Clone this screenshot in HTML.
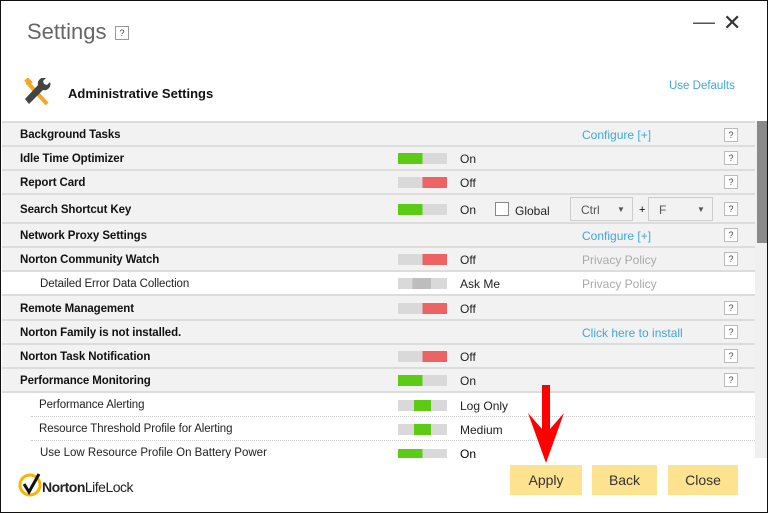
<!DOCTYPE html>
<html><head><style>
body{margin:0;width:768px;height:513px;overflow:hidden;font-family:"Liberation Sans",sans-serif;background:#fff;}
.win{position:absolute;left:0;top:0;width:766px;height:511px;border:1px solid #111;background:#fff;overflow:hidden}
.abs{position:absolute}
.row{position:absolute;left:1px;width:753px;background:#f2f2f2;border-bottom:2px solid #dcdcdc;box-sizing:border-box}
.row.w{background:#fff;border-bottom:1px dotted #ccc;left:30px;width:724px}
.lab{position:absolute;left:18px;font-size:11.5px;font-weight:bold;color:#111;letter-spacing:-0.1px;margin-top:1px}
.w .lab{left:8px;font-weight:normal;font-size:11.5px;color:#222;margin-top:0}
.tg{position:absolute;left:396px;width:49px;height:11px;background:#d9d9d9}
.w .tg{left:367px}
.st{position:absolute;left:458px;font-size:12px;color:#222}
.w .st{left:429px}
.lk{position:absolute;left:580px;font-size:12px;color:#3fa7dc}
.gr{color:#aaa}
.w .lk{left:551px}
.q{position:absolute;left:722px;width:12px;height:12px;border:1px solid #bbb;background:#fff;font-size:9px;text-align:center;line-height:12px;color:#444}
.btn{position:absolute;top:464px;height:30px;background:#fde28f;font-size:14px;color:#333;text-align:center;line-height:30px}
</style></head><body><div class="win">
<div class="abs" style="left:26px;top:18px;font-size:22px;color:#666">Settings</div>
<div class="abs" style="left:114px;top:25px;width:12px;height:12px;border:1px solid #999;font-size:9px;text-align:center;line-height:12px;color:#444">?</div>
<div class="abs" style="left:692px;top:8px;font-size:22px;color:#555">—</div>
<div class="abs" style="left:722px;top:9px;font-size:22px;color:#333">✕</div>
<svg class="abs" style="left:22px;top:77px" width="32" height="30" viewBox="0 0 32 30"><path d="M4 4 L24 26" stroke="#f5a623" stroke-width="4"/><path d="M3 1 L8 6" stroke="#f5a623" stroke-width="5"/><path d="M6 26 L20 12 A6 6 0 0 0 27 4 L24 7 L21 6 L20 3 L23 0 A6 6 0 0 0 15 7 L2 21 Z" fill="#444"/></svg>
<div class="abs" style="left:67px;top:85px;font-size:13px;font-weight:bold;color:#111">Administrative Settings</div>
<div class="abs" style="left:668px;top:79px;font-size:11.5px;color:#3fa7dc">Use Defaults</div>
<div class="abs" style="left:1px;top:120px;width:753px;height:2px;background:#dcdcdc"></div>

<div class="row" style="top:122px;height:24px"><span class="lab" style="top:5px">Background Tasks</span><span class="lk" style="top:5px">Configure [+]</span><span class="q" style="top:5px">?</span></div>
<div class="row" style="top:146px;height:24px"><span class="lab" style="top:5px">Idle Time Optimizer</span><span class="tg" style="top:6px;background:linear-gradient(90deg,#5ccb13 50%,#d9d9d9 50%)"></span><span class="st" style="top:5px">On</span><span class="q" style="top:4px">?</span></div>
<div class="row" style="top:170px;height:24px"><span class="lab" style="top:5px">Report Card</span><span class="tg" style="top:6px;background:linear-gradient(90deg,#d9d9d9 50%,#ec6363 50%)"></span><span class="st" style="top:5px">Off</span><span class="q" style="top:4px">?</span></div>
<div class="row" style="top:194px;height:29px"><span class="lab" style="top:8px">Search Shortcut Key</span><span class="tg" style="top:9px;background:linear-gradient(90deg,#5ccb13 50%,#d9d9d9 50%)"></span><span class="st" style="top:8px">On</span>
<span class="abs" style="left:493px;top:7px;width:12px;height:12px;border:1px solid #888;background:#fff"></span><span class="st" style="left:513px;top:9px">Global</span>
<span class="abs" style="left:568px;top:2px;width:63px;height:24px;border:1px solid #ccc;font-size:12px;color:#555;line-height:24px;box-sizing:border-box;padding-left:10px">Ctrl<span style="position:absolute;left:46px;font-size:8px">▼</span></span>
<span class="abs" style="left:637px;top:9px;font-size:11px">+</span>
<span class="abs" style="left:646px;top:2px;width:65px;height:24px;border:1px solid #ccc;font-size:12px;color:#555;line-height:24px;box-sizing:border-box;padding-left:10px">F<span style="position:absolute;left:48px;font-size:8px">▼</span></span>
<span class="q" style="top:7px">?</span></div>
<div class="row" style="top:223px;height:24px"><span class="lab" style="top:5px">Network Proxy Settings</span><span class="lk" style="top:5px">Configure [+]</span><span class="q" style="top:4px">?</span></div>
<div class="row" style="top:247px;height:24px"><span class="lab" style="top:5px">Norton Community Watch</span><span class="tg" style="top:6px;background:linear-gradient(90deg,#d9d9d9 50%,#ec6363 50%)"></span><span class="st" style="top:5px">Off</span><span class="lk gr" style="top:5px">Privacy Policy</span><span class="q" style="top:4px">?</span></div>
<div class="row" style="top:271px;height:24px;background:#fff"><span class="lab" style="top:5px;left:38px;font-weight:normal;font-size:11.5px;color:#222">Detailed Error Data Collection</span><span class="tg" style="top:6px;background:linear-gradient(90deg,#d9d9d9 30%,#bdbdbd 30%,#bdbdbd 67%,#d9d9d9 67%)"></span><span class="st" style="top:5px">Ask Me</span><span class="lk gr" style="top:5px">Privacy Policy</span></div>
<div class="row" style="top:295px;height:25px"><span class="lab" style="top:6px">Remote Management</span><span class="tg" style="top:7px;background:linear-gradient(90deg,#d9d9d9 50%,#ec6363 50%)"></span><span class="st" style="top:6px">Off</span><span class="q" style="top:5px">?</span></div>
<div class="row" style="top:320px;height:24px"><span class="lab" style="top:5px">Norton Family is not installed.</span><span class="lk" style="top:5px">Click here to install</span><span class="q" style="top:4px">?</span></div>
<div class="row" style="top:344px;height:24px"><span class="lab" style="top:5px">Norton Task Notification</span><span class="tg" style="top:6px;background:linear-gradient(90deg,#d9d9d9 50%,#ec6363 50%)"></span><span class="st" style="top:5px">Off</span><span class="q" style="top:4px">?</span></div>
<div class="row" style="top:368px;height:24px"><span class="lab" style="top:5px">Performance Monitoring</span><span class="tg" style="top:6px;background:linear-gradient(90deg,#5ccb13 50%,#d9d9d9 50%)"></span><span class="st" style="top:5px">On</span><span class="q" style="top:4px">?</span></div>
<div class="row w" style="top:392px;height:24px"><span class="lab" style="top:6px">Performance Alerting</span><span class="tg" style="top:7px;background:linear-gradient(90deg,#d9d9d9 33%,#5ccb13 33%,#5ccb13 67%,#d9d9d9 67%)"></span><span class="st" style="top:6px">Log Only</span></div>
<div class="row w" style="top:416px;height:24px"><span class="lab" style="top:6px">Resource Threshold Profile for Alerting</span><span class="tg" style="top:7px;background:linear-gradient(90deg,#d9d9d9 33%,#5ccb13 33%,#5ccb13 67%,#d9d9d9 67%)"></span><span class="st" style="top:6px">Medium</span></div>
<div class="abs" style="left:1px;top:440px;width:753px;height:17px;overflow:hidden"><span class="abs" style="left:38px;top:6px;font-size:11.5px;color:#222">Use Low Resource Profile On Battery Power</span><span class="abs" style="left:396px;top:8px;width:49px;height:11px;background:linear-gradient(90deg,#5ccb13 50%,#d9d9d9 50%)"></span><span class="abs" style="left:458px;top:6px;font-size:12px">On</span></div>
<div class="abs" style="left:754px;top:120px;width:12px;height:337px;background:#f0f0f0"></div>
<div class="abs" style="left:756px;top:120px;width:10px;height:122px;background:#8a8a8a"></div>

<svg class="abs" style="left:17px;top:471px" width="26" height="26" viewBox="0 0 26 26"><circle cx="12" cy="13" r="10" fill="none" stroke="#f7b500" stroke-width="3"/><path d="M6 12 L11 20 L21 2" fill="none" stroke="#111" stroke-width="3"/></svg>
<div class="abs" style="left:41px;top:478px;font-size:14px;color:#222;letter-spacing:-0.5px"><b>Norton</b>LifeLock</div>
<div class="btn" style="left:509px;width:72px">Apply</div>
<div class="btn" style="left:591px;width:65px">Back</div>
<div class="btn" style="left:667px;width:70px">Close</div>
<svg class="abs" style="left:525px;top:384px" width="40" height="80" viewBox="0 0 40 80"><path d="M16 0 L24 0 L24 44 L38 28 L20 78 L2 28 L16 44 Z" fill="#f00"/></svg>
</div></body></html>
